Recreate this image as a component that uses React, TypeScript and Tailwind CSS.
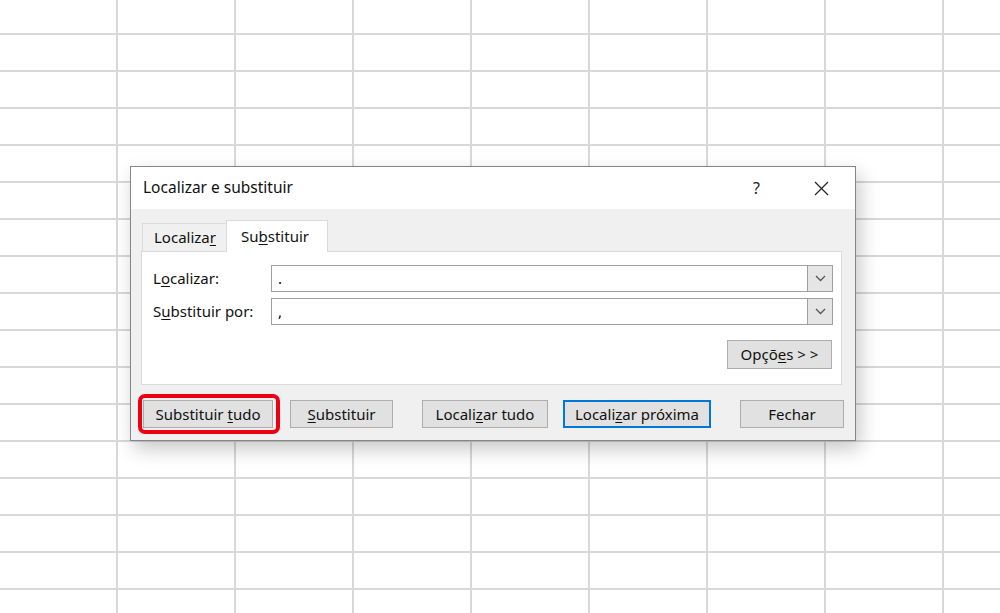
import React from "react";

const face = "h-[28px] bg-[#e1e1e1] text-[15px] text-[#111] flex items-center justify-center";
const btn = `${face} border border-[#adadad]`;

function Chevron() {
  return (
    <svg width="11" height="7" viewBox="0 0 11 7" fill="none">
      <path d="M1 1l4.5 4.5L10 1" stroke="#555" strokeWidth="1.3" />
    </svg>
  );
}

function Combo({ value }: { value: string }) {
  return (
    <div className="flex h-[27px] flex-1 border border-[#a0a0a0] bg-white">
      <div className="flex flex-1 items-center pl-[6px] text-[15px] text-black">{value}</div>
      <div className="flex w-[25px] items-center justify-center border-l border-[#a0a0a0] bg-[#e5e5e5]">
        <Chevron />
      </div>
    </div>
  );
}

export default function App() {
  return (
    <div className="relative h-[613px] w-[1000px] overflow-hidden bg-white bg-[linear-gradient(to_right,#d8d8d8_2px,transparent_2px),linear-gradient(to_bottom,#d8d8d8_2px,transparent_2px)] bg-[size:118px_37px] bg-[position:116px_33px] font-['Noto_Sans',sans-serif]">
      {/* dialog */}
      <div className="absolute left-[130px] top-[166px] flex h-[275px] w-[726px] flex-col border border-[#868686] bg-[#f0f0f0] shadow-[4px_8px_18px_rgba(0,0,0,0.22)]">
        <div className="flex h-[42px] items-center bg-white pl-[12px] pr-[26px]">
          <span className="text-[15.5px] text-[#111]">Localizar e substituir</span>
          <span className="ml-auto mr-[54px] text-[16px] text-[#222]">?</span>
          <svg width="15" height="15" viewBox="0 0 15 15">
            <path d="M1 1l13 13M14 1L1 14" stroke="#222" strokeWidth="1.2" />
          </svg>
        </div>

        <div className="pl-[10px] pr-[13px] pt-[10px]">
          {/* tabs */}
          <div className="flex items-end pl-[1px]">
            <div className="flex h-[28px] w-[84px] items-center border-l border-t border-[#dadada] pl-[11px] text-[15px] text-[#111]">
              Localiza<u className="underline-offset-2">r</u>
            </div>
            <div className="relative top-[1px] flex h-[32px] w-[102px] items-center border border-b-0 border-[#dadada] bg-white pl-[14px] text-[15px] text-[#111]">
              Su<u className="underline-offset-2">b</u>stituir
            </div>
          </div>

          {/* panel */}
          <div className="flex h-[134px] flex-col border border-[#dadada] bg-white pl-[11px] pr-[8px] pt-[13px]">
            <div className="flex items-center">
              <span className="w-[118px] text-[15px] text-[#111]">
                L<u className="underline-offset-2">o</u>calizar:
              </span>
              <Combo value="." />
            </div>
            <div className="mt-[6px] flex items-center">
              <span className="w-[118px] text-[15px] text-[#111]">
                S<u className="underline-offset-2">u</u>bstituir por:
              </span>
              <Combo value="," />
            </div>
            <div className="mt-[15px] flex justify-end pr-[1px]">
              <div className={`${btn} h-[29px] w-[105px]`}>
                Opçõ<u className="underline-offset-2">e</u>s &gt; &gt;
              </div>
            </div>
          </div>
        </div>

        {/* bottom buttons */}
        <div className="mt-[15px] flex pl-[12px]">
          <div className="relative">
            <div className={`${btn} w-[130px]`}>
              Substituir <u className="ml-[4px] underline-offset-2">t</u>udo
            </div>
            <div className="absolute -bottom-[6px] -left-[5px] -right-[7px] -top-[6px] rounded-[7px] border-4 border-[#ec0012]" />
          </div>
          <div className={`${btn} ml-[17px] w-[103px]`}>
            <u className="underline-offset-2">S</u>ubstituir
          </div>
          <div className={`${btn} ml-[29px] w-[126px]`}>
            Locali<u className="underline-offset-2">z</u>ar tudo
          </div>
          <div className={`${face} ml-[15px] w-[148px] border-2 border-[#0078d7]`}>
            Locali<u className="underline-offset-2">z</u>ar próxima
          </div>
          <div className={`${btn} ml-[29px] w-[104px]`}>Fechar</div>
        </div>
      </div>
    </div>
  );
}
